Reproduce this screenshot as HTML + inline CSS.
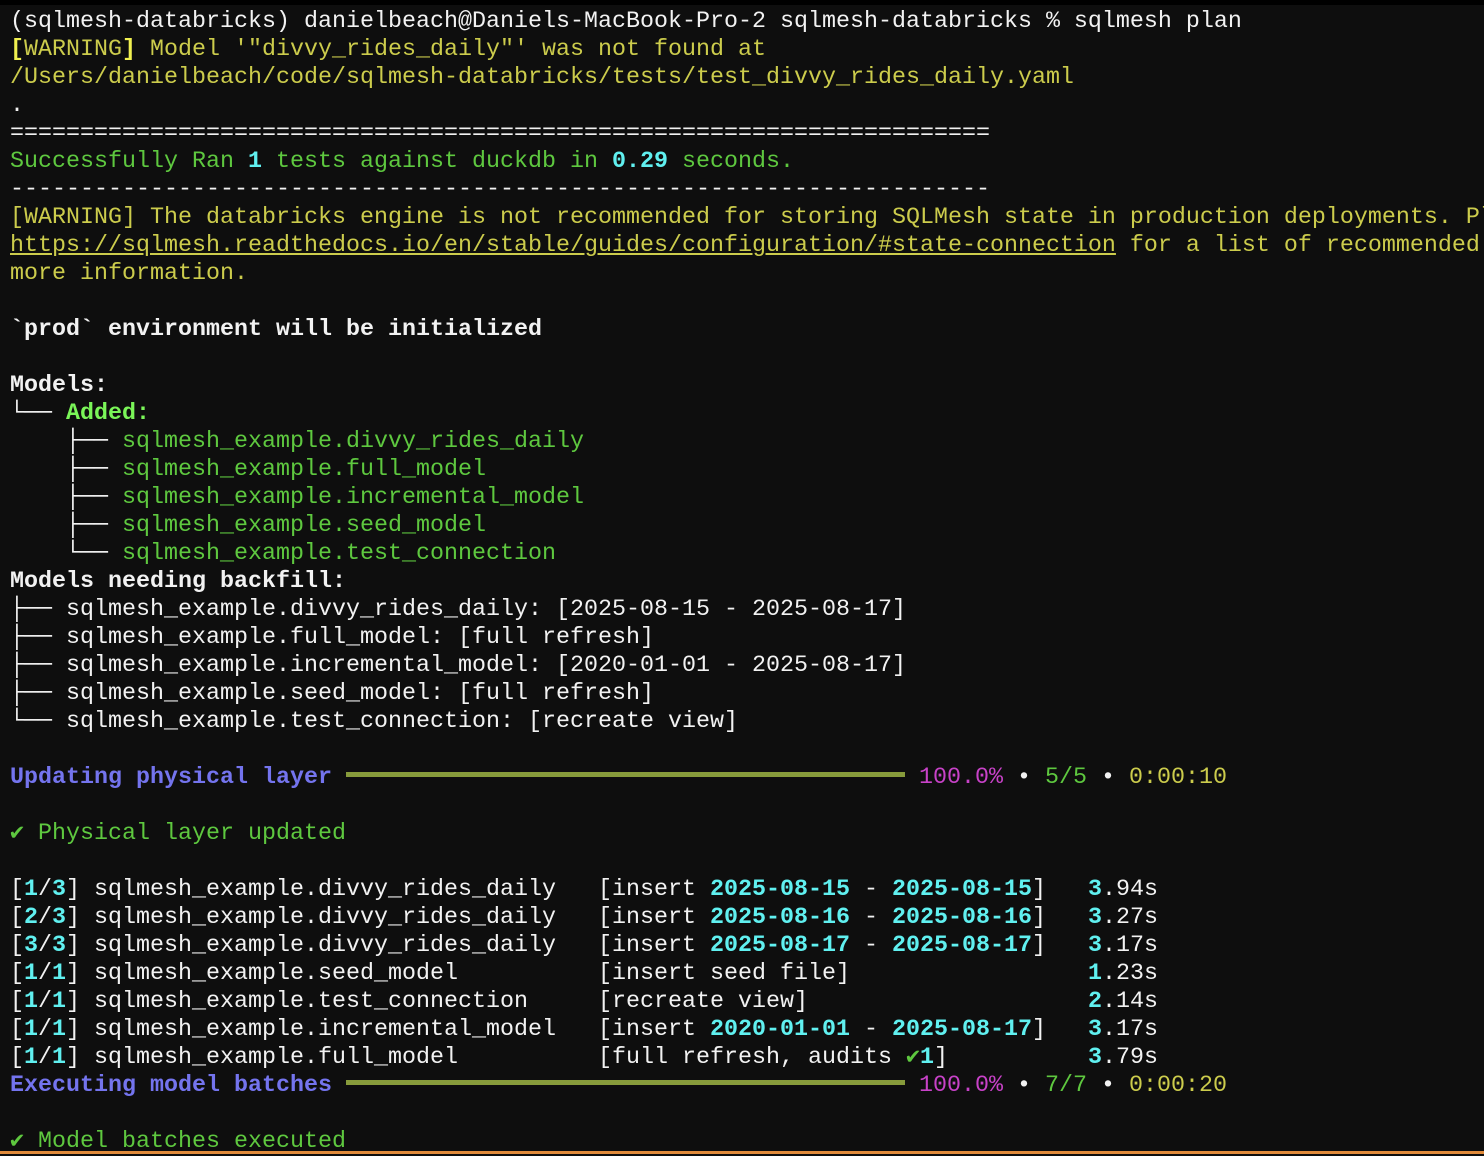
<!DOCTYPE html>
<html><head><meta charset="utf-8"><style>
html,body{margin:0;padding:0;background:#0e0e0e;width:1484px;height:1154px;overflow:hidden}
.top{position:absolute;left:0;top:0;width:1484px;height:5px;background:#000}
.bot{position:absolute;left:0;top:1151px;width:1484px;height:3px;background:#e08a3a}
pre{position:absolute;left:10px;top:8px;width:1474px;overflow:hidden;margin:0;font-family:"Liberation Mono","DejaVu Sans Mono",monospace;font-size:23.33px;line-height:28px;color:#f2f2f2;white-space:pre}
.y{color:#cccc4c}.Y{color:#f0f050;font-weight:bold}.g{color:#5ec83f}.G{color:#7af558;font-weight:bold}
.c{color:#60f0f0;font-weight:bold}.p{color:#7474ee;font-weight:bold}.m{color:#c842c8}.b{font-weight:bold}
.u{text-decoration:underline}
.bar{display:inline-block;width:559px;height:5px;background:#879b3b;vertical-align:middle;margin-top:-4px}
</style></head><body>
<div class="top"></div>
<pre>(sqlmesh-databricks) danielbeach@Daniels-MacBook-Pro-2 sqlmesh-databricks % sqlmesh plan
<span class="Y">[</span><span class="y">WARNING</span><span class="Y">]</span><span class="y"> Model '"divvy_rides_daily"' was not found at</span>
<span class="y">/Users/danielbeach/code/sqlmesh-databricks/tests/test_divvy_rides_daily.yaml</span>
.
======================================================================
<span class="g">Successfully Ran </span><span class="c">1</span><span class="g"> tests against duckdb in </span><span class="c">0.29</span><span class="g"> seconds.</span>
----------------------------------------------------------------------
<span class="y">[WARNING] The databricks engine is not recommended for storing SQLMesh state in production deployments. Please see</span>
<span class="y u">https://sqlmesh.readthedocs.io/en/stable/guides/configuration/#state-connection</span><span class="y"> for a list of recommended engines and</span>
<span class="y">more information.</span>

<span class="b">`prod` environment will be initialized</span>

<span class="b">Models:</span>
└── <span class="G">Added:</span>
    ├── <span class="g">sqlmesh_example.divvy_rides_daily</span>
    ├── <span class="g">sqlmesh_example.full_model</span>
    ├── <span class="g">sqlmesh_example.incremental_model</span>
    ├── <span class="g">sqlmesh_example.seed_model</span>
    └── <span class="g">sqlmesh_example.test_connection</span>
<span class="b">Models needing backfill:</span>
├── sqlmesh_example.divvy_rides_daily: [2025-08-15 - 2025-08-17]
├── sqlmesh_example.full_model: [full refresh]
├── sqlmesh_example.incremental_model: [2020-01-01 - 2025-08-17]
├── sqlmesh_example.seed_model: [full refresh]
└── sqlmesh_example.test_connection: [recreate view]

<span class="p">Updating physical layer</span> <span class="bar"></span> <span class="m">100.0%</span> • <span class="g">5/5</span> • <span class="y">0:00:10</span>

<span class="g">✔ Physical layer updated</span>

[<span class="c">1</span>/<span class="c">3</span>] sqlmesh_example.divvy_rides_daily   [insert <span class="c">2025-08-15</span> - <span class="c">2025-08-15</span>]   <span class="c">3</span>.94s
[<span class="c">2</span>/<span class="c">3</span>] sqlmesh_example.divvy_rides_daily   [insert <span class="c">2025-08-16</span> - <span class="c">2025-08-16</span>]   <span class="c">3</span>.27s
[<span class="c">3</span>/<span class="c">3</span>] sqlmesh_example.divvy_rides_daily   [insert <span class="c">2025-08-17</span> - <span class="c">2025-08-17</span>]   <span class="c">3</span>.17s
[<span class="c">1</span>/<span class="c">1</span>] sqlmesh_example.seed_model          [insert seed file]                 <span class="c">1</span>.23s
[<span class="c">1</span>/<span class="c">1</span>] sqlmesh_example.test_connection     [recreate view]                    <span class="c">2</span>.14s
[<span class="c">1</span>/<span class="c">1</span>] sqlmesh_example.incremental_model   [insert <span class="c">2020-01-01</span> - <span class="c">2025-08-17</span>]   <span class="c">3</span>.17s
[<span class="c">1</span>/<span class="c">1</span>] sqlmesh_example.full_model          [full refresh, audits <span class="g">✔</span><span class="c">1</span>]          <span class="c">3</span>.79s
<span class="p">Executing model batches</span> <span class="bar"></span> <span class="m">100.0%</span> • <span class="g">7/7</span> • <span class="y">0:00:20</span>

<span class="g">✔ Model batches executed</span>
</pre>
<div class="bot"></div>
</body></html>
